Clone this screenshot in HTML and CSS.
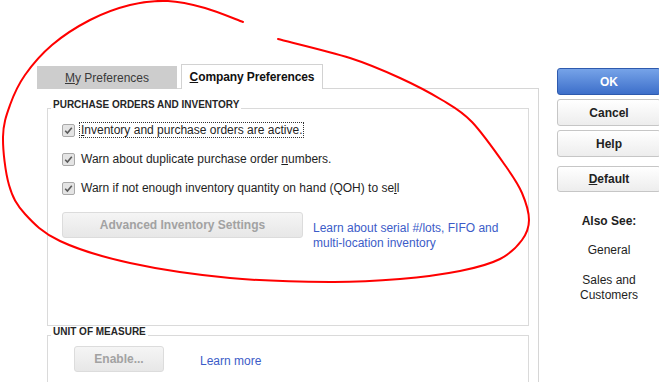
FILE: index.html
```html
<!DOCTYPE html>
<html>
<head>
<meta charset="utf-8">
<title>Preferences</title>
<link rel="stylesheet" href="styles.css">
</head>
<body>
<div class="page">
  <div class="main">
    <div class="tabs">
      <div class="tab"><u>M</u>y Preferences</div>
      <div class="tab active"><u>C</u>ompany Preferences</div>
    </div>
    <div class="panel">
      <fieldset class="group po">
        <legend>PURCHASE ORDERS AND INVENTORY</legend>
        <div class="body">
          <div class="opt">
            <span class="cb"><svg width="13" height="13" viewBox="0 0 13 13"><rect x="0.5" y="0.5" width="12" height="12" rx="1.5" fill="#e4e4e4" stroke="#a9a9a9"/><path d="M3.2 6.8 L5.4 9 L9.8 3.8" fill="none" stroke="#5a5a5a" stroke-width="1.6"/></svg></span>
            <span class="lbl focus"><u>I</u>nventory and purchase orders are active.</span>
          </div>
          <div class="opt">
            <span class="cb"><svg width="13" height="13" viewBox="0 0 13 13"><rect x="0.5" y="0.5" width="12" height="12" rx="1.5" fill="#e4e4e4" stroke="#a9a9a9"/><path d="M3.2 6.8 L5.4 9 L9.8 3.8" fill="none" stroke="#5a5a5a" stroke-width="1.6"/></svg></span>
            <span class="lbl">Warn about duplicate purchase order <u>n</u>umbers.</span>
          </div>
          <div class="opt last">
            <span class="cb"><svg width="13" height="13" viewBox="0 0 13 13"><rect x="0.5" y="0.5" width="12" height="12" rx="1.5" fill="#e4e4e4" stroke="#a9a9a9"/><path d="M3.2 6.8 L5.4 9 L9.8 3.8" fill="none" stroke="#5a5a5a" stroke-width="1.6"/></svg></span>
            <span class="lbl">Warn if not enough inventory quantity on hand (QOH) to se<u>l</u>l</span>
          </div>
          <div class="adv-row">
            <button class="btn-dis adv">Advanced Inventory Settings</button>
            <a class="link adv-link">Learn about serial #/lots, FIFO and<br>multi-location inventory</a>
          </div>
        </div>
      </fieldset>
      <fieldset class="group uom">
        <legend>UNIT OF MEASURE</legend>
        <div class="body uom-body">
          <button class="btn-dis enable">Enable...</button>
          <a class="link more">Learn more</a>
        </div>
      </fieldset>
    </div>
  </div>
  <div class="side">
    <div class="sbtn ok">OK</div>
    <div class="sbtn">Cancel</div>
    <div class="sbtn">Help</div>
    <div class="sbtn default"><span><u>D</u>efault</span></div>
    <div class="also">
      <div class="also-title">Also See:</div>
      <div class="also-item">General</div>
      <div class="also-item">Sales and<br>Customers</div>
    </div>
  </div>
</div>
<svg class="annot" width="659" height="382" viewBox="0 0 659 382">
  <path d="M243,22 C236.7,19.7 217.5,11.5 205,8 C192.5,4.5 180.5,1.5 168,1 C155.5,0.5 143,1.8 130,5 C117,8.2 103,13.3 90,20 C77,26.7 62.8,35.8 52,45 C41.2,54.2 32,65 25,75 C18,85 13.7,94.7 10,105 C6.3,115.3 3.2,123.7 3,137 C2.8,150.3 5.3,172.2 9,185 C12.7,197.8 16.5,204.7 25,214 C33.5,223.3 42.5,232.8 60,241 C77.5,249.2 101.7,256.8 130,263 C158.3,269.2 196.7,274.8 230,278 C263.3,281.2 301.7,281.8 330,282 C358.3,282.2 378.3,280.8 400,279 C421.7,277.2 443.3,274.3 460,271 C476.7,267.7 489.7,264.2 500,259 C510.3,253.8 517.2,246.5 522,240 C526.8,233.5 529,227.8 529,220 C529,212.2 525.7,201.7 522,193 C518.3,184.3 515.3,179.8 507,168 C498.7,156.2 482.8,133.3 472,122 C461.2,110.7 454,107.3 442,100 C430,92.7 415.3,85 400,78 C384.7,71 370.3,64.5 350,58 C329.7,51.5 290,42.2 278,39" fill="none" stroke="#ff0000" stroke-width="2" stroke-linecap="round"/>
</svg>
</body>
</html>
```
FILE: styles.css
```css
html, body {
  margin: 0;
  padding: 0;
}
body {
  width: 659px;
  height: 382px;
  overflow: hidden;
  position: relative;
  background: #ffffff;
  color: #1e1e1e;
  font-family: "Liberation Sans", Arial, sans-serif;
  font-size: 12px;
}
.page {
  display: flex;
  padding-left: 37px;
  gap: 18px;
  height: 382px;
}
.main {
  width: 502px;
  flex: none;
  padding-top: 64px;
  display: flex;
  flex-direction: column;
}
.tabs {
  display: flex;
  align-items: flex-end;
  height: 24px;
  flex: none;
  gap: 4px;
  position: relative;
  z-index: 1;
}
.tab {
  width: 140px;
  height: 23px;
  margin-bottom: -1px;
  background: #cdcdcd;
  color: #3a3a3a;
  display: flex;
  align-items: center;
  justify-content: center;
}
.tab.active {
  height: 24px;
  background: #ffffff;
  border: 1px solid #d2d2d2;
  border-bottom: none;
  color: #111;
  font-weight: bold;
  letter-spacing: -0.1px;
}
.panel {
  flex: 1;
  min-height: 0;
  overflow: hidden;
  border-top: 1px solid #d6d6d6;
  border-right: 1px solid #d6d6d6;
  padding: 10px 9px 0 10px;
}
.group {
  margin: 0;
  padding: 0;
  border: 1px solid #dadada;
  min-width: 0;
}
.group legend {
  margin-left: 3px;
  padding: 0 2px 7px;
  font-size: 10px;
  font-weight: bold;
  line-height: 12px;
  color: #262626;
}
.body {
  padding: 2px 0 74px 14px;
}
.opt {
  display: flex;
  align-items: center;
  height: 20px;
  margin-bottom: 9px;
}
.opt.last {
  margin-bottom: 14px;
}
.cb {
  width: 13px;
  height: 13px;
  flex: none;
  display: block;
}
.cb svg {
  display: block;
}
.lbl {
  margin-left: 4px;
  padding: 0 1px;
  border: 1px dotted transparent;
  line-height: 14px;
  color: #1e1e1e;
}
.lbl.focus {
  border-color: #333;
}
.adv-row {
  display: flex;
  align-items: flex-start;
}
.btn-dis {
  box-sizing: border-box;
  height: 26px;
  border: 1px solid #dcdcdc;
  border-radius: 3px;
  background: linear-gradient(#f5f5f5, #e7e7e7);
  color: #a2a2a2;
  font-family: "Liberation Sans", Arial, sans-serif;
  font-size: 12px;
  font-weight: bold;
  padding: 0;
}
.adv {
  width: 241px;
}
.link {
  color: #3c5cc8;
  line-height: 15px;
}
.adv-link {
  margin-left: 10px;
  margin-top: 9px;
}
.uom {
  margin-top: 0;
}
.uom-body {
  display: flex;
  align-items: center;
  padding: 1px 0 40px 26px;
}
.enable {
  width: 90px;
}
.more {
  margin-left: 36px;
  margin-top: 4px;
}
.side {
  width: 104px;
  flex: none;
  padding-top: 68px;
  display: flex;
  flex-direction: column;
}
.sbtn {
  box-sizing: border-box;
  height: 27px;
  border: 1px solid #c6c6c6;
  border-radius: 3px;
  background: linear-gradient(#ffffff, #ededed);
  color: #222;
  font-weight: bold;
  display: flex;
  align-items: center;
  justify-content: center;
  margin-bottom: 4px;
}
.sbtn.ok {
  background: linear-gradient(#76a3e8, #3d6fca);
  border-color: #2e5aae;
  color: #ffffff;
}
.sbtn.default {
  margin-top: 5px;
  height: 26px;
}
.also {
  margin-top: 18px;
  text-align: center;
  line-height: 15px;
  color: #1e1e1e;
}
.also-title {
  font-weight: bold;
}
.also-item {
  margin-top: 14px;
}
.also-item + .also-item {
  margin-top: 15px;
}
.annot {
  position: absolute;
  left: 0;
  top: 0;
  pointer-events: none;
}
```
